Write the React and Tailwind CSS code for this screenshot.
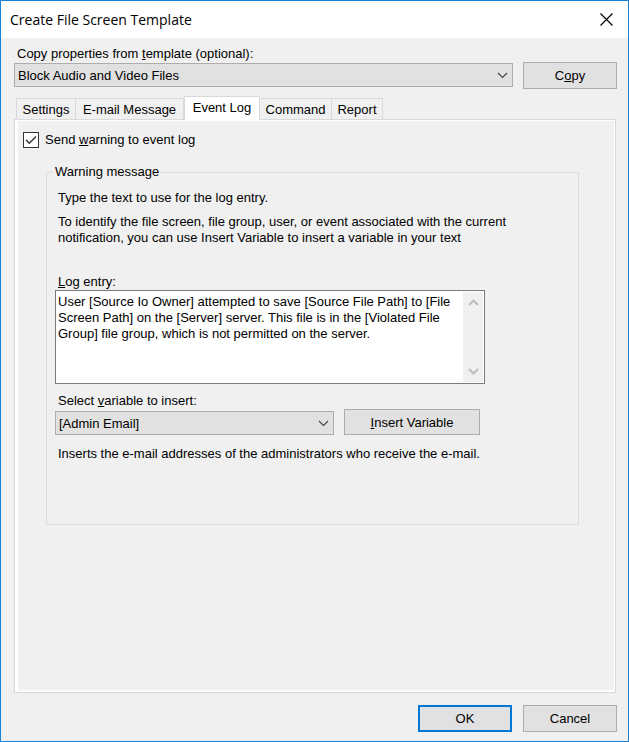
import { useState } from 'react'
import { clsx } from 'clsx'

const TABS = [
  { name: 'Settings', width: 'w-[60px]' },
  { name: 'E-mail Message', width: 'w-[108px]' },
  { name: 'Event Log', width: 'w-[76px]' },
  { name: 'Command', width: 'w-[72px]' },
  { name: 'Report', width: 'w-[51px]' },
]

const LOG_ENTRY =
  'User [Source Io Owner] attempted to save [Source File Path] to [File Screen Path] on the [Server] server. This file is in the [Violated File Group] file group, which is not permitted on the server.'

function Chevron({ className, up = false, thick = false }) {
  return (
    <svg
      viewBox="0 0 11 7"
      className={clsx('h-[7px] w-[11px]', up && 'rotate-180', className)}
      fill="none"
      stroke="currentColor"
      strokeWidth={thick ? 2.2 : 1.2}
      aria-hidden="true"
    >
      <path d="M1 1l4.5 4.5L10 1" />
    </svg>
  )
}

function Button({ children, primary = false, className }) {
  return (
    <button
      type="button"
      className={clsx(
        'shrink-0 bg-[#e1e1e1] text-center hover:bg-[#e5f1fb]',
        primary ? 'border-2 border-[#0078d7]' : 'border border-[#adadad]',
        className
      )}
    >
      {children}
    </button>
  )
}

function Select({ id, options, className }) {
  return (
    <div className={clsx('relative', className)}>
      <select
        id={id}
        className="block h-6 w-full appearance-none rounded-none border border-[#adadad] bg-[#e1e1e1] pt-px pr-6 pl-[3px] leading-4"
      >
        {options.map((option) => (
          <option key={option}>{option}</option>
        ))}
      </select>
      <Chevron className="pointer-events-none absolute top-[9px] right-[5px] text-[#444]" />
    </div>
  )
}

function Tabs({ active, onChange }) {
  return (
    <div role="tablist" className="flex items-end px-0.5">
      {TABS.map((tab) => (
        <button
          key={tab.name}
          type="button"
          role="tab"
          aria-selected={tab.name === active}
          onClick={() => onChange(tab.name)}
          className={clsx(
            'border-[#d9d9d9] whitespace-nowrap',
            tab.width,
            tab.name === active
              ? 'relative -mb-px h-6 border-x border-t bg-white pb-0.5'
              : 'h-[21px] border-t border-r bg-[#f0f0f0] pt-px first:border-l'
          )}
        >
          {tab.name}
        </button>
      ))}
    </div>
  )
}

function WarningMessage() {
  return (
    <fieldset className="mt-4 mr-[35px] ml-[23px] h-[361px] border border-[#dcdcdc] pl-2">
      <legend className="-ml-0.5 px-0.5">Warning message</legend>

      <div className="px-[3px] pt-2.5">
        <p>Type the text to use for the log entry.</p>
        <p className="mt-2 max-w-[480px]">
          To identify the file screen, file group, user, or event associated with the current
          notification, you can use Insert Variable to insert a variable in your text
        </p>
      </div>

      <label htmlFor="log-entry" className="mt-7 block px-[3px]">
        <u>L</u>og entry:
      </label>
      <div className="flex h-[94px] max-w-[430px] border border-[#7a7a7a] bg-white p-px">
        <textarea
          id="log-entry"
          className="min-w-0 flex-1 resize-none overflow-hidden px-px pt-0.5 outline-none"
          defaultValue={LOG_ENTRY}
        />
        <div className="flex w-5 shrink-0 flex-col items-center justify-between bg-[#f0f0f0] py-[7px] text-[#bfbfbf]">
          <Chevron up thick />
          <Chevron thick />
        </div>
      </div>

      <label htmlFor="variable" className="mt-[9px] block px-[3px]">
        Select <u>v</u>ariable to insert:
      </label>
      <div className="flex max-w-[425px] items-end gap-2.5">
        <Select id="variable" className="flex-1" options={['[Admin Email]', '[Server]', '[Source File Path]']} />
        <Button className="h-[26px] w-[136px] pt-px">
          <u>I</u>nsert Variable
        </Button>
      </div>
      <p className="mt-[11px] px-[3px]">
        Inserts the e-mail addresses of the administrators who receive the e-mail.
      </p>
    </fieldset>
  )
}

export default function App() {
  const [activeTab, setActiveTab] = useState('Event Log')

  return (
    <div className="flex min-h-screen flex-col border border-[#1883d7] bg-[#f0f0f0] font-['Liberation_Sans',Arial,sans-serif] text-[13px] leading-4 text-black">
      <header className="flex h-[37px] items-center justify-between bg-white pr-[15px] pl-[9px]">
        <h1 className="font-['Open_Sans',sans-serif] text-[14px] leading-5">Create File Screen Template</h1>
        <button type="button" aria-label="Close">
          <svg viewBox="0 0 13 13" className="size-[13px]" fill="none" stroke="currentColor" strokeWidth="1.2">
            <path d="M0.5 0.5l12 12M12.5 0.5l-12 12" />
          </svg>
        </button>
      </header>

      <main className="flex flex-1 flex-col pt-2 pr-[11px] pb-[9px] pl-[13px]">
        <label htmlFor="template" className="px-[3px]">
          Copy properties from <u>t</u>emplate (optional):
        </label>
        <div className="flex items-start gap-2.5">
          <Select id="template" className="mt-px flex-1" options={['Block Audio and Video Files', 'Block Executable Files']} />
          <Button className="h-[27px] w-[94px]">
            C<u>o</u>py
          </Button>
        </div>

        <div className="mt-[7px] mr-px flex flex-1 flex-col">
          <Tabs active={activeTab} onChange={setActiveTab} />
          <div role="tabpanel" className="flex flex-1 flex-col border border-[#d9d9d9] bg-white pt-px pr-px pb-0.5 pl-[3px]">
            <div className="flex-1 bg-[#f0f0f0] pt-[11px] pl-[5px]">
              <label className="flex items-center gap-1.5">
                <span className="relative size-4">
                  <input
                    type="checkbox"
                    defaultChecked
                    className="peer block size-4 appearance-none border border-[#333] bg-white"
                  />
                  <svg
                    viewBox="0 0 16 16"
                    className="pointer-events-none absolute inset-0 hidden size-4 peer-checked:block"
                    fill="none"
                    stroke="#333"
                    strokeWidth="1.4"
                    aria-hidden="true"
                  >
                    <path d="M3 7.8l3.3 3.4L13 4.5" />
                  </svg>
                </span>
                <span>
                  Send <u>w</u>arning to event log
                </span>
              </label>

              <WarningMessage />
            </div>
          </div>
        </div>

        <div className="mt-3 flex justify-end gap-[11px]">
          <Button primary className="h-[27px] w-[94px]">
            OK
          </Button>
          <Button className="h-[27px] w-[94px]">Cancel</Button>
        </div>
      </main>
    </div>
  )
}
